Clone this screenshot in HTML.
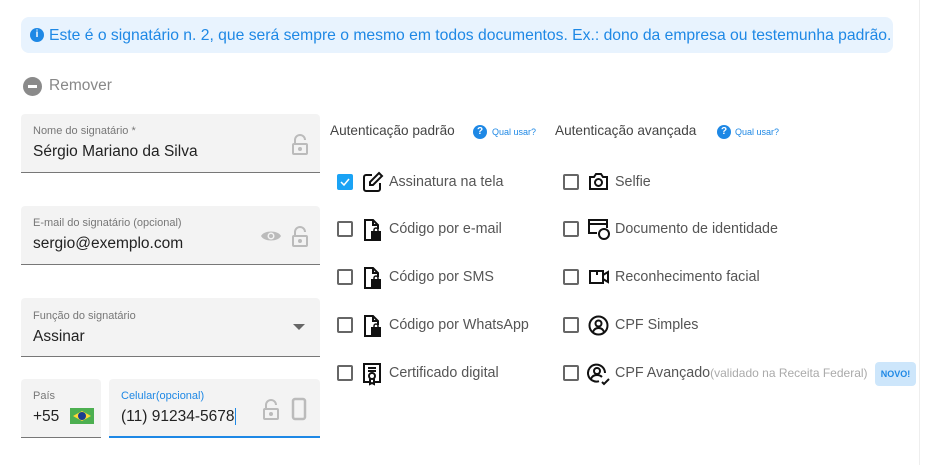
<!DOCTYPE html>
<html><head><meta charset="utf-8"><style>
*{box-sizing:border-box;margin:0;padding:0}
body{width:935px;height:465px;background:#fff;font-family:"Liberation Sans",sans-serif;position:relative;overflow:hidden;color:#333}
.abs{position:absolute}
.info{left:21px;top:17px;width:872px;height:36px;background:#e8f3fe;border-radius:8px;color:#1e88e5;font-size:15.7px;line-height:37px;padding-left:18px;white-space:nowrap}
.info .i{position:absolute;left:9px;top:11px;width:14px;height:14px;border-radius:50%;background:#1e88e5;color:#fff;font-size:10px;line-height:14px;text-align:center;font-weight:bold}
.vline{left:919px;top:0;width:1px;height:465px;background:#eee}
.field{background:#f3f3f3;border-radius:4px 4px 0 0;border-bottom:1px solid #777}
.lbl{position:absolute;left:12px;font-size:11px;color:#777}
.val{position:absolute;left:12px;font-size:15.5px;color:#222}
.cb{width:16px;height:16px;border:2px solid #666;border-radius:2px}
.cb.on{background:#1aa3f5;border-color:#1aa3f5}
.t{font-size:14.3px;color:#555}
.h{font-size:13.6px;color:#444}
.q{width:14px;height:14px;border-radius:50%;background:#1e88e5;color:#fff;font-size:10px;font-weight:bold;text-align:center;line-height:14px}
.ql{font-size:9px;color:#1e88e5}
</style></head><body>
<div class="abs info"><span class="i">i</span><span style="position:absolute;left:28px">Este é o signatário n. 2, que será sempre o mesmo em todos documentos. Ex.: dono da empresa ou testemunha padrão.</span></div>
<div class="abs vline"></div>
<div class="abs" style="left:23px;top:77px;width:19px;height:19px;border-radius:50%;background:#8a8a8a"><div style="position:absolute;left:5px;top:8px;width:9px;height:3px;background:#fff"></div></div>
<div class="abs" style="left:49px;top:77px;font-size:15.5px;color:#888">Remover</div>

<div class="abs field" style="left:21px;top:114px;width:299px;height:59px"><div class="lbl" style="top:11px">Nome do signatário *</div><div class="val" style="top:29px">Sérgio Mariano da Silva</div>
<svg class="abs" style="left:270px;top:20px" width="18" height="22" viewBox="0 0 18 22" fill="none" stroke="#bbb" stroke-width="2"><path d="M4 10V6a5 5 0 0 1 10 0"/><rect x="2" y="10" width="14" height="10" rx="1"/><circle cx="9" cy="15" r="1" fill="#bbb"/></svg></div>

<div class="abs field" style="left:21px;top:206px;width:299px;height:59px"><div class="lbl" style="top:11px">E-mail do signatário (opcional)</div><div class="val" style="top:29px">sergio@exemplo.com</div>
<svg class="abs" style="left:239px;top:22px" width="22" height="16" viewBox="0 0 22 16"><path d="M1 8C4 2 18 2 21 8C18 14 4 14 1 8Z" fill="#bbb"/><circle cx="11" cy="8" r="3.5" fill="#f3f3f3"/><circle cx="11" cy="8" r="2" fill="#bbb"/></svg>
<svg class="abs" style="left:270px;top:20px" width="18" height="22" viewBox="0 0 18 22" fill="none" stroke="#bbb" stroke-width="2"><path d="M4 10V6a5 5 0 0 1 10 0"/><rect x="2" y="10" width="14" height="10" rx="1"/><circle cx="9" cy="15" r="1" fill="#bbb"/></svg></div>

<div class="abs field" style="left:21px;top:298px;width:299px;height:59px"><div class="lbl" style="top:12px">Função do signatário</div><div class="val" style="top:30px">Assinar</div>
<div class="abs" style="left:272px;top:26px;width:0;height:0;border-left:6px solid transparent;border-right:6px solid transparent;border-top:6px solid #666"></div></div>

<div class="abs field" style="left:21px;top:379px;width:80px;height:59px"><div class="lbl" style="top:11px">País</div><div class="val" style="top:29px">+55</div>
<div class="abs" style="left:49px;top:29px;width:24px;height:16px;background:#4caf50"><div style="position:absolute;left:3px;top:3px;width:18px;height:10px;background:#fdd835;clip-path:polygon(50% 0,100% 50%,50% 100%,0 50%)"></div><div style="position:absolute;left:8px;top:4px;width:8px;height:8px;border-radius:50%;background:#1a3c8f"></div></div></div>

<div class="abs field" style="left:109px;top:379px;width:211px;height:59px;border-bottom:2px solid #1e88e5"><div class="lbl" style="top:11px;color:#1e88e5">Celular(opcional)</div><div class="val" style="top:29px">(11) 91234-5678<span style="border-left:1px solid #1e88e5;margin-left:1px"></span></div>
<svg class="abs" style="left:153px;top:20px" width="18" height="22" viewBox="0 0 18 22" fill="none" stroke="#bbb" stroke-width="2"><path d="M4 10V6a5 5 0 0 1 10 0"/><rect x="2" y="10" width="14" height="10" rx="1"/><circle cx="9" cy="15" r="1" fill="#bbb"/></svg>
<svg class="abs" style="left:182px;top:18px" width="16" height="24" viewBox="0 0 16 24" fill="none" stroke="#bbb" stroke-width="2.5"><rect x="2" y="2" width="12" height="20" rx="2"/></svg></div>

<div class="abs h" style="left:330px;top:123px">Autenticação padrão</div>
<div class="abs q" style="left:473px;top:125px">?</div>
<div class="abs ql" style="left:492px;top:127px">Qual usar?</div>
<div class="abs h" style="left:555px;top:123px">Autenticação avançada</div>
<div class="abs q" style="left:717px;top:125px">?</div>
<div class="abs ql" style="left:735px;top:127px">Qual usar?</div>

<div class="abs cb on" style="left:337px;top:174px"><svg width="12" height="12" viewBox="0 0 12 12" style="position:absolute;left:0;top:0"><path d="M2 6l3 3 5-6" stroke="#fff" stroke-width="1.5" fill="none"/></svg></div>
<svg class="abs" style="left:362px;top:171px" width="22" height="22" viewBox="0 0 22 22" fill="none" stroke="#111" stroke-width="2"><path d="M10 4H4a2 2 0 0 0-2 2v12a2 2 0 0 0 2 2h12a2 2 0 0 0 2-2v-6"/><path d="M17 2l3 3-9 9H8v-3z"/></svg>
<div class="abs t" style="left:389px;top:174px">Assinatura na tela</div>

<div class="abs cb" style="left:337px;top:221px"></div>
<svg class="abs" style="left:362px;top:218px" width="20" height="24" viewBox="0 0 20 24" fill="none" stroke="#111" stroke-width="2"><path d="M9 22H3V2h8l5 5v4"/><path d="M11 2v5h5"/><rect x="10" y="14" width="8" height="8" fill="#111"/><path d="M12 14v-2a2 2 0 0 1 4 0v2" stroke-width="1.5"/></svg>
<div class="abs t" style="left:389px;top:221px">Código por e-mail</div>

<div class="abs cb" style="left:337px;top:269px"></div>
<svg class="abs" style="left:362px;top:266px" width="20" height="24" viewBox="0 0 20 24" fill="none" stroke="#111" stroke-width="2"><path d="M9 22H3V2h8l5 5v4"/><path d="M11 2v5h5"/><rect x="10" y="14" width="8" height="8" fill="#111"/><path d="M12 14v-2a2 2 0 0 1 4 0v2" stroke-width="1.5"/></svg>
<div class="abs t" style="left:389px;top:269px">Código por SMS</div>

<div class="abs cb" style="left:337px;top:317px"></div>
<svg class="abs" style="left:362px;top:314px" width="20" height="24" viewBox="0 0 20 24" fill="none" stroke="#111" stroke-width="2"><path d="M9 22H3V2h8l5 5v4"/><path d="M11 2v5h5"/><rect x="10" y="14" width="8" height="8" fill="#111"/><path d="M12 14v-2a2 2 0 0 1 4 0v2" stroke-width="1.5"/></svg>
<div class="abs t" style="left:389px;top:317px">Código por WhatsApp</div>

<div class="abs cb" style="left:337px;top:365px"></div>
<svg class="abs" style="left:362px;top:362px" width="20" height="24" viewBox="0 0 20 24" fill="none" stroke="#111" stroke-width="2"><path d="M7 20H2V2h16v18h-5"/><path d="M6 6h8M6 9h8"/><circle cx="10" cy="14" r="3"/><path d="M8 17v5l2-1 2 1v-5"/></svg>
<div class="abs t" style="left:389px;top:365px">Certificado digital</div>

<div class="abs cb" style="left:563px;top:174px"></div>
<svg class="abs" style="left:588px;top:172px" width="21" height="19" viewBox="0 0 21 19" fill="none" stroke="#111" stroke-width="2"><path d="M2 5h4l2-3h5l2 3h4v12H2z"/><circle cx="10.5" cy="10.5" r="3.5"/></svg>
<div class="abs t" style="left:615px;top:174px">Selfie</div>

<div class="abs cb" style="left:563px;top:221px"></div>
<svg class="abs" style="left:587px;top:218px" width="24" height="23" viewBox="0 0 24 23" fill="none" stroke="#111" stroke-width="2"><path d="M10 15H2V2h18v8"/><path d="M2 6h18"/><circle cx="17" cy="16" r="5"/></svg>
<div class="abs t" style="left:615px;top:221px">Documento de identidade</div>

<div class="abs cb" style="left:563px;top:269px"></div>
<svg class="abs" style="left:588px;top:269px" width="22" height="16" viewBox="0 0 22 16" fill="none" stroke="#111" stroke-width="2"><path d="M2 2h13v12H2z"/><path d="M15 6l5-3v10l-5-3"/><path d="M9 2v4"/></svg>
<div class="abs t" style="left:615px;top:269px">Reconhecimento facial</div>

<div class="abs cb" style="left:563px;top:317px"></div>
<svg class="abs" style="left:588px;top:315px" width="21" height="21" viewBox="0 0 21 21" fill="none" stroke="#111" stroke-width="2"><circle cx="10.5" cy="10.5" r="9"/><circle cx="10.5" cy="8.5" r="3"/><path d="M5 17c1-3 3-4 5.5-4s4.5 1 5.5 4"/></svg>
<div class="abs t" style="left:615px;top:317px">CPF Simples</div>

<div class="abs cb" style="left:563px;top:365px"></div>
<svg class="abs" style="left:587px;top:362px" width="24" height="24" viewBox="0 0 24 24" fill="none" stroke="#111" stroke-width="2"><path d="M18 11a8.5 8.5 0 1 0-6 8.2"/><circle cx="10" cy="9" r="3"/><path d="M4 17c1-3 3-4 6-4s4 1 5 2"/><path d="M15 20l2 2 5-5"/></svg>
<div class="abs t" style="left:615px;top:365px">CPF Avançado<span style="font-size:12px;color:#aaa">(validado na Receita Federal)</span></div>
<div class="abs" style="left:875px;top:362px;width:41px;height:24px;background:#cde6fb;border-radius:4px;color:#1e88e5;font-size:9px;font-weight:bold;text-align:center;line-height:24px">NOVO!</div>
</body></html>
